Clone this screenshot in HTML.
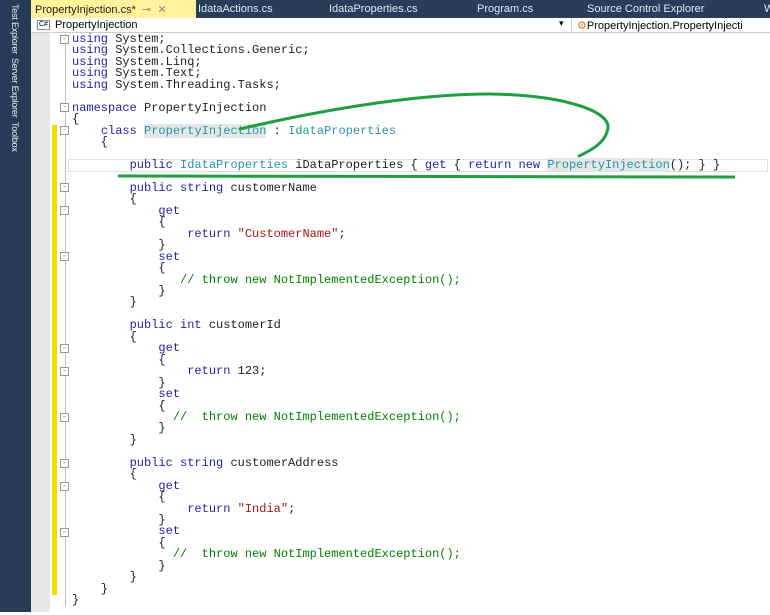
<!DOCTYPE html>
<html><head><style>
*{margin:0;padding:0;box-sizing:border-box}
body{width:770px;height:615px;overflow:hidden;background:#fff;position:relative;font-family:"Liberation Sans",sans-serif}
#side{position:absolute;left:0;top:0;width:31px;height:612px;background:#293a56}
.vt{position:absolute;left:10px;color:#e8ecf4;font-size:9px;writing-mode:vertical-rl;white-space:nowrap;letter-spacing:-0.2px}
#tabs{position:absolute;left:31px;top:0;width:739px;height:18px;background:#2b3c59}
.tab{position:absolute;top:3px;color:#dfe6f2;font-size:11px}
#active{position:absolute;left:31px;top:0;width:165px;height:19px;background:#fff29d;color:#1e1e1e;font-size:11px;padding:3px 0 0 4px}
#nav{position:absolute;left:31px;top:18px;width:739px;height:15px;background:#fff;border-bottom:1px solid #ccc;font-size:11px}
#gut{position:absolute;left:31px;top:33px;width:19px;height:579px;background:#e6e7e9}
#yb{position:absolute;left:52px;top:125px;width:5px;height:470px;background:#fad800}
#ml{position:absolute;left:65px;top:34px;width:1px;height:572px;background:#b8b8b8}
pre{position:absolute;left:72px;top:34px;font-family:"Liberation Mono",monospace;font-size:12px;line-height:11.45px;color:#1e1e1e}
.k{color:#1f1fb0}.t{color:#2b91af}.s{color:#a31515}.c{color:#008000}
.hl{background:#e3e8e6;color:#2b91af}
.f{position:absolute;left:60px;width:9px;height:9px;border:1px solid #999;background:#fff;font-size:8px;line-height:6px;text-align:center;color:#666}
#cur{position:absolute;left:68px;top:159px;width:700px;height:13px;border:1px solid #e0e0e0}
</style></head><body>
<div id="side"><div class="vt" style="top:4px">Test Explorer</div><div class="vt" style="top:58px">Server Explorer</div><div class="vt" style="top:122px">Toolbox</div></div>
<div id="tabs">
<span class="tab" style="left:167px">IdataActions.cs</span>
<span class="tab" style="left:298px">IdataProperties.cs</span>
<span class="tab" style="left:446px">Program.cs</span>
<span class="tab" style="left:556px">Source Control Explorer</span>
<span class="tab" style="left:733px">W</span>
</div>
<div id="active">PropertyInjection.cs* &nbsp;<span style="color:#888">⊸</span> &nbsp;<span style="color:#888">✕</span></div>
<div id="nav"><span style="position:absolute;left:6px;top:2px;border:1px solid #888;font-size:7px;padding:0 1px;line-height:8px">C#</span><span style="position:absolute;left:24px;top:1px">PropertyInjection</span><span style="position:absolute;left:528px;top:0;font-size:9px">▾</span><span style="position:absolute;left:540px;top:0;width:1px;height:14px;background:#ccc"></span><span style="position:absolute;left:546px;top:1px;white-space:nowrap"><span style="color:#c08030">⚙</span>PropertyInjection.PropertyInjecti</span></div>
<div id="gut"></div><div id="yb"></div><div id="ml"></div><div id="cur"></div>
<div class="f" style="top:35px">-</div><div class="f" style="top:103px">-</div><div class="f" style="top:126px">-</div><div class="f" style="top:183px">-</div><div class="f" style="top:206px">-</div><div class="f" style="top:252px">-</div><div class="f" style="top:344px">-</div><div class="f" style="top:367px">-</div><div class="f" style="top:413px">-</div><div class="f" style="top:459px">-</div><div class="f" style="top:482px">-</div><div class="f" style="top:528px">-</div>
<pre><span class="k">using</span> System;
<span class="k">using</span> System.Collections.Generic;
<span class="k">using</span> System.Linq;
<span class="k">using</span> System.Text;
<span class="k">using</span> System.Threading.Tasks;

<span class="k">namespace</span> PropertyInjection
{
    <span class="k">class</span> <span class="hl">PropertyInjection</span> : <span class="t">IdataProperties</span>
    {

        <span class="k">public</span> <span class="t">IdataProperties</span> iDataProperties { <span class="k">get</span> { <span class="k">return</span> <span class="k">new</span> <span class="hl">PropertyInjection</span>(); } }

        <span class="k">public</span> <span class="k">string</span> customerName
        {
            <span class="k">get</span>
            {
                <span class="k">return</span> <span class="s">"CustomerName"</span>;
            }
            <span class="k">set</span>
            {
               <span class="c">// throw new NotImplementedException();</span>
            }
        }

        <span class="k">public</span> <span class="k">int</span> customerId
        {
            <span class="k">get</span>
            {
                <span class="k">return</span> 123;
            }
            <span class="k">set</span>
            {
              <span class="c">//  throw new NotImplementedException();</span>
            }
        }

        <span class="k">public</span> <span class="k">string</span> customerAddress
        {
            <span class="k">get</span>
            {
                <span class="k">return</span> <span class="s">"India"</span>;
            }
            <span class="k">set</span>
            {
              <span class="c">//  throw new NotImplementedException();</span>
            }
        }
    }
}</pre>
<svg style="position:absolute;left:0;top:0" width="770" height="615"><path d="M240 129 C 330 108, 420 94, 490 94 C 560 95, 610 110, 608 128 C 606 142, 592 150, 579 156" fill="none" stroke="#1fa040" stroke-width="3" stroke-linecap="round"/><path d="M118 176 L735 177" stroke="#1fa040" stroke-width="3"/></svg>
</body></html>
